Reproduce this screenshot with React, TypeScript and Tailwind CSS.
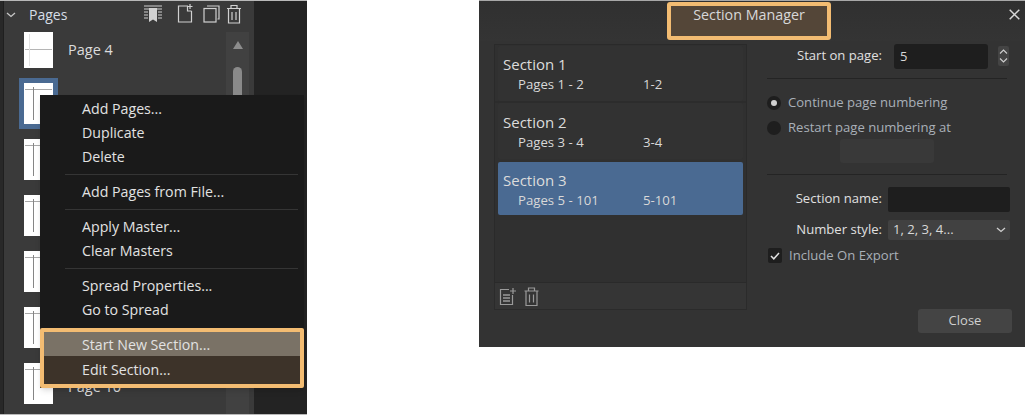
import React from "react";

const font = { fontFamily: '"Open Sans", "Noto Sans", sans-serif' };

function Thumb({ first }: { first?: boolean }) {
  if (first) {
    return (
      <div className="relative h-[36px] w-[29px] bg-white">
        <div className="absolute left-[1px] right-[1px] top-[17px] h-px bg-[#b5b5b5]" />
        <div className="absolute bottom-[2px] left-[5px] top-[2px] w-px bg-[#e2e2e2]" />
      </div>
    );
  }
  return (
    <div className="relative h-[41px] w-[29px] bg-white">
      <div className="absolute left-[1px] right-[1px] top-[6px] h-px bg-[#a8a8a8]" />
      <div className="absolute bottom-[4px] left-[9px] top-[4px] w-px bg-[#858585]" />
    </div>
  );
}

function MenuRow({ label, className = "" }: { label: string; className?: string }) {
  return <div className={`flex h-[24px] items-center pl-[42px] text-[14.2px] text-[#e2e2e2] ${className}`}>{label}</div>;
}

function MenuSep() {
  return <div className="my-[5px] ml-[25px] mr-[6px] h-px bg-[#353535]" />;
}

function PagesPanel() {
  return (
    <div className="relative flex h-[415px] w-[307px] shrink-0 border-y border-[#b9b9b9] bg-[#232323]">
      <div className="w-[3px] bg-[#282828]" />
      <div className="flex w-[251px] flex-col border-l border-[#1f1f1f] bg-[#3a3a3a]">
        <div className="flex h-[31px] items-center pb-[5px]">
          <svg width="10" height="6" viewBox="0 0 10 6" className="ml-[2px] mt-[2px] text-[#c8c8c8]">
            <path d="M1 1l4 3.500L9 1" fill="none" stroke="currentColor" strokeWidth="1.300" />
          </svg>
          <span className="ml-[13px] text-[14px] text-[#d6dde6]">Pages</span>
          <div className="ml-[76px] flex items-center text-[#d0d0d0]">
            <svg width="20" height="20" viewBox="0 0 20 20" fill="none">
              <path d="M1 2h18M1 5h18M1 8h4M15 8h4M1 11h4M15 11h4M1 14h4M15 14h4" stroke="currentColor" strokeWidth="1.100" />
              <path d="M6 4h8v14l-4-2.500L6 18z" fill="currentColor" />
            </svg>
            <svg width="17" height="20" viewBox="0 0 17 20" fill="none" className="ml-[14px]">
              <path d="M11 2H1.500v16h13V7M10.500 2v5h4M13 0v5M10.500 2.500h5" stroke="currentColor" strokeWidth="1.200" />
            </svg>
            <svg width="18" height="20" viewBox="0 0 18 20" fill="none" className="ml-[9px]">
              <rect x="1" y="4.500" width="12" height="13.500" stroke="currentColor" strokeWidth="1.200" />
              <path d="M4 2h12v13h-1.500" stroke="currentColor" strokeWidth="1.200" />
            </svg>
            <svg width="16" height="20" viewBox="0 0 16 20" fill="none" className="ml-[5px]">
              <path d="M1 4.500h14M5 4V1.500h6V4M2.500 5v14h11V5M6 8v8M10 8v8" stroke="currentColor" strokeWidth="1.200" />
            </svg>
          </div>
        </div>
        <div className="flex min-h-0 flex-1">
          <div className="flex flex-1 flex-col pl-[20px]">
            <div className="flex h-[36px] items-center">
              <Thumb first />
              <span className="ml-[15px] text-[14.500px] text-[#dcdcdc]">Page 4</span>
            </div>
            <div className="ml-[-5px] mt-[10px] flex h-[51px] w-[39px] items-center justify-center bg-[#4a6a92]">
              <Thumb />
            </div>
            <div className="mt-[10px]">
              <Thumb />
            </div>
            {[0, 1, 2].map((i) => (
              <div key={i} className="mt-[15px]">
                <Thumb />
              </div>
            ))}
            <div className="mt-[15px] flex items-center">
              <Thumb />
              <span className="ml-[15px] mt-[6px] text-[14.500px] text-[#dcdcdc]">Page 10</span>
            </div>
          </div>
          <div className="mr-[5px] flex w-[23px] flex-col items-center bg-[#414141] pt-[9px]">
            <svg width="10" height="8" viewBox="0 0 10 8">
              <path d="M5 0l5 8H0z" fill="#8c8c8c" />
            </svg>
            <div className="mt-[18px] h-[40px] w-[9px] rounded-full bg-[#8a8a8a]" />
          </div>
        </div>
      </div>

      <div className="absolute left-[40px] top-[94px] flex w-[264px] flex-col bg-[#1a1a1a] pt-[2px] shadow-md" style={font}>
        <MenuRow label="Add Pages..." />
        <MenuRow label="Duplicate" />
        <MenuRow label="Delete" />
        <MenuSep />
        <MenuRow label="Add Pages from File..." />
        <MenuSep />
        <MenuRow label="Apply Master..." />
        <MenuRow label="Clear Masters" />
        <MenuSep />
        <MenuRow label="Spread Properties..." />
        <MenuRow label="Go to Spread" />
        <div className="mt-[6px] rounded-[2px] border-[4px] border-[#f3bc72] bg-[#3d3329]">
          <MenuRow label="Start New Section..." className="!pl-[38px] bg-[#7a7266] pt-[2px]" />
          <MenuRow label="Edit Section..." className="!h-[28px] !pl-[38px] pb-[1px]" />
        </div>
      </div>
    </div>
  );
}

function SectionItem({ title, pages, range, active, className = "" }: { title: string; pages: string; range: string; active?: boolean; className?: string }) {
  return (
    <div className={`mx-[3px] flex flex-col rounded-[2px] pl-[5px] ${active ? "bg-[#4a6a92]" : "bg-[#323232]"} ${className}`}>
      <div className="text-[15px] leading-[20px] text-[#dcdcdc]">{title}</div>
      <div className="flex text-[13.200px] leading-[20px] text-[#d8d8d8]">
        <span className="ml-[15px] w-[125px]">{pages}</span>
        <span>{range}</span>
      </div>
    </div>
  );
}

function Radio({ checked }: { checked?: boolean }) {
  return (
    <span className="flex h-[14px] w-[14px] items-center justify-center rounded-full bg-[#1e1e1e]">
      {checked && <span className="h-[6px] w-[6px] rounded-full bg-[#d0d0d0]" />}
    </span>
  );
}

function Dialog() {
  return (
    <div className="flex h-[347px] w-[546px] shrink-0 flex-col border-t border-[#a8a8a8] bg-[#333333] text-[#dcdcdc]">
      <div className="relative flex h-[40px] justify-center bg-gradient-to-b from-[#303030] to-[#343434]">
        <div className="ml-[-6px] mt-[1px] flex h-[38px] w-[164px] justify-center rounded-[3px] border-[4px] border-[#f3bc72] bg-[#544638] text-[14.300px] leading-[18px] text-[#d8d8d8]">
          Section Manager
        </div>
        <svg width="11" height="11" viewBox="0 0 11 11" className="absolute right-[5px] top-[8px] text-[#d8d8d8]">
          <path d="M.7.7l9.600 9.600M10.300.7L.7 10.300" stroke="currentColor" strokeWidth="1.500" />
        </svg>
      </div>
      <div className="flex flex-1 pl-[15px]">
        <div className="mt-[3px] flex h-[266px] w-[253px] shrink-0 flex-col">
          <div className="flex h-[239px] flex-col border border-[#2a2a2a] bg-[#303030] pt-[1px]">
            <SectionItem title="Section 1" pages="Pages 1 - 2" range="1-2" className="h-[55px] pt-[8px]" />
            <div className="h-[2px] bg-[#2c2c2c]" />
            <SectionItem title="Section 2" pages="Pages 3 - 4" range="3-4" className="h-[56px] pt-[9px]" />
            <div className="h-[3px]" />
            <SectionItem title="Section 3" pages="Pages 5 - 101" range="5-101" active className="h-[53px] pt-[8px]" />
          </div>
          <div className="flex h-[27px] items-center gap-[7px] border border-t-0 border-[#2b2b2b] bg-[#353535] pl-[4px] text-[#9a9a9a]">
            <svg width="18" height="19" viewBox="0 0 18 19" fill="none">
              <path d="M10 2.500H1.500v15h12V8" stroke="currentColor" strokeWidth="1.200" />
              <path d="M4 8h7M4 11h7M4 14h7" stroke="currentColor" strokeWidth="1.500" />
              <path d="M14 1v6M11 4h6" stroke="currentColor" strokeWidth="1.200" />
            </svg>
            <svg width="15" height="19" viewBox="0 0 15 19" fill="none">
              <path d="M.5 4h14M4.500 3.500V1h6v2.500M2 4.500v14h11v-14M5.500 7.500v8M9.500 7.500v8" stroke="currentColor" strokeWidth="1.200" />
            </svg>
          </div>
        </div>
        <div className="ml-[20px] mt-[2px] flex min-w-0 flex-1 flex-col text-[13.100px]">
          <div className="flex h-[26px] items-center">
            <span className="w-[115px] text-right text-[#e0e0e0]">Start on page:</span>
            <div className="ml-[12px] flex h-[25px] w-[94px] items-center rounded-[3px] bg-[#1e1e1e] pl-[6px] pt-[2px] text-[13px] text-[#d8d8d8]">5</div>
            <div className="ml-[10px] flex h-[20px] w-[11px] items-center justify-center rounded-[2px] bg-[#444444]">
              <svg width="9" height="16" viewBox="0 0 9 16" fill="none" stroke="#cfcfcf" strokeWidth="1.100">
                <path d="M1 5.500l3.500-3.500L8 5.500M1 10.500L4.500 14 8 10.500" />
              </svg>
            </div>
          </div>
          <div className="mt-[9px] h-px w-[240px] bg-[#242424]" />
          <div className="mt-[17px] flex h-[14px] items-center gap-[7px] text-[#a9b0b8]">
            <Radio checked />
            <span>Continue page numbering</span>
          </div>
          <div className="mt-[11px] flex h-[14px] items-center gap-[7px] text-[#a9b0b8]">
            <Radio />
            <span>Restart page numbering at</span>
          </div>
          <div className="ml-[73px] mt-[4px] h-[24px] w-[94px] rounded-[3px] bg-[#393939]" />
          <div className="mt-[11px] h-px w-[240px] bg-[#242424]" />
          <div className="mt-[12px] flex h-[25px] items-center">
            <span className="w-[115px] pb-[2px] text-right text-[#e0e0e0]">Section name:</span>
            <div className="ml-[6px] h-[25px] w-[122px] rounded-[2px] bg-[#1e1e1e]" />
          </div>
          <div className="mt-[8px] flex h-[20px] items-center">
            <span className="w-[115px] text-right text-[#e0e0e0]">Number style:</span>
            <div className="ml-[6px] flex h-[20px] w-[122px] items-center justify-between rounded-[2px] bg-[#414141] pl-[5px] pr-[4px] text-[#d8d8d8]">
              <span>1, 2, 3, 4...</span>
              <svg width="10" height="6" viewBox="0 0 10 6" fill="none" stroke="#cfcfcf" strokeWidth="1.300">
                <path d="M1 1l4 3.500L9 1" />
              </svg>
            </div>
          </div>
          <div className="ml-[1px] mt-[8px] flex h-[15px] items-center gap-[7px] text-[#a9b0b8]">
            <span className="flex h-[15px] w-[14px] items-center justify-center rounded-[2px] bg-[#1e1e1e]">
              <svg width="10" height="8" viewBox="0 0 10 8" fill="none" stroke="#e0e0e0" strokeWidth="1.500">
                <path d="M1 4l2.800 2.800L9 1" />
              </svg>
            </span>
            <span>Include On Export</span>
          </div>
          <div className="ml-[151px] mt-[46px] flex h-[24px] w-[94px] items-center justify-center rounded-[3px] bg-[#444444] text-[13px] text-[#d0d0d0]">
            Close
          </div>
        </div>
      </div>
    </div>
  );
}

export default function App() {
  return (
    <div className="flex h-[415px] w-[1028px] items-start overflow-hidden bg-white" style={font}>
      <PagesPanel />
      <div className="ml-[172px]">
        <Dialog />
      </div>
    </div>
  );
}
